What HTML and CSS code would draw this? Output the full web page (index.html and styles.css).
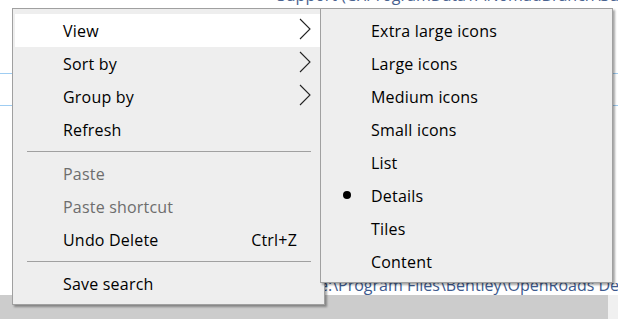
FILE: index.html
```html
<!DOCTYPE html>
<html lang="en">
<head>
    <meta charset="UTF-8">
    <meta name="viewport" content="width=device-width, initial-scale=1.0">
    <title>Context menu</title>

    <link rel="stylesheet" href="styles.css">
</head>
<body>

    <div class="explorer">
        <div class="top-line"><span>Support (C:\ProgramData\T\NomadBranch\Support)</span></div>
        <div class="grid">
            <div class="grid-row"></div>
            <div class="grid-row"></div>
        </div>
        <div class="spacer"></div>
        <div class="path-row">e:\Program Files\Bentley\OpenRoads Designer</div>
        <div class="hscroll">
            <div class="hscroll-thumb"></div>
            <div class="hscroll-corner"></div>
        </div>
    </div>

    <div class="menu main-menu">
        <div class="item active">
            <span class="label">View</span>
            <svg class="chevron" width="12" height="22" viewBox="0 0 12 22"><polyline points="1,1 11,11 1,21" fill="none" stroke="#222" stroke-width="1.1"/></svg>
        </div>
        <div class="item">
            <span class="label">Sort by</span>
            <svg class="chevron" width="12" height="22" viewBox="0 0 12 22"><polyline points="1,1 11,11 1,21" fill="none" stroke="#222" stroke-width="1.1"/></svg>
        </div>
        <div class="item">
            <span class="label">Group by</span>
            <svg class="chevron" width="12" height="22" viewBox="0 0 12 22"><polyline points="1,1 11,11 1,21" fill="none" stroke="#222" stroke-width="1.1"/></svg>
        </div>
        <div class="item"><span class="label">Refresh</span></div>
        <div class="separator"></div>
        <div class="item disabled"><span class="label">Paste</span></div>
        <div class="item disabled"><span class="label">Paste shortcut</span></div>
        <div class="item">
            <span class="label">Undo Delete</span>
            <span class="shortcut">Ctrl+Z</span>
        </div>
        <div class="separator"></div>
        <div class="item"><span class="label">Save search</span></div>
    </div>

    <div class="menu sub-menu">
        <div class="item"><span class="label">Extra large icons</span></div>
        <div class="item"><span class="label">Large icons</span></div>
        <div class="item"><span class="label">Medium icons</span></div>
        <div class="item"><span class="label">Small icons</span></div>
        <div class="item"><span class="label">List</span></div>
        <div class="item checked"><span class="bullet"></span><span class="label">Details</span></div>
        <div class="item"><span class="label">Tiles</span></div>
        <div class="item"><span class="label">Content</span></div>
    </div>

</body>
</html>
```

FILE: styles.css
```css
body {
    margin: 0;
    padding: 0;
    width: 618px;
    height: 333px;
    overflow: hidden;
    background-color: #fff;
    font-family: "Open Sans", "Noto Sans", Arial, sans-serif;
    position: relative;
}

.explorer {
    display: flex;
    flex-direction: column;
    height: 333px;
}

.top-line {
    height: 8px;
    overflow: hidden;
    display: flex;
    align-items: flex-end;
    padding-left: 277px;
    font-size: 16px;
    line-height: 20px;
    color: #4a6390;
    white-space: nowrap;
}

.top-line span {
    margin-bottom: 3px;
}

.grid {
    margin-top: 65px;
}

.grid-row {
    height: 31px;
    border-top: 1px solid #9fcdf2;
}

.spacer {
    flex: 1;
}

.path-row {
    height: 12px;
    overflow: hidden;
    padding-left: 319px;
    font-size: 16px;
    line-height: 20px;
    color: #3d5a8e;
    white-space: nowrap;
    display: flex;
    align-items: flex-end;
}

.hscroll {
    display: flex;
    height: 24px;
    margin-bottom: 14px;
}

.hscroll-thumb {
    width: 608px;
    background-color: #cccccc;
}

.hscroll-corner {
    flex: 1;
    background-color: #f0f0f0;
}

/* context menus */
.menu {
    position: absolute;
    top: 8px;
    background-color: #eeeeee;
    border: 1px solid #a0a0a0;
    box-shadow: 2px 2px 2px rgba(0, 0, 0, 0.35);
    padding: 5px 2px 4px 2px;
    box-sizing: border-box;
    font-size: 16px;
    letter-spacing: 0.2px;
    color: #000;
}

.main-menu {
    left: 12px;
    width: 313px;
    height: 297px;
}

.sub-menu {
    left: 320px;
    width: 293px;
    height: 275px;
}

.item {
    height: 33px;
    display: flex;
    align-items: center;
    padding-left: 48px;
    padding-right: 11px;
    position: relative;
}

.item.active {
    background-color: #fff;
}

.item.disabled {
    color: #6d6d6d;
}

.label {
    flex: 1;
    padding-top: 1px;
}

.shortcut {
    margin-right: 14px;
    padding-top: 1px;
}

.chevron {
    display: block;
    margin-top: -3px;
}

.separator {
    height: 11px;
    display: flex;
    align-items: center;
    padding: 0 11px 0 12px;
}

.separator::after {
    content: "";
    flex: 1;
    height: 1px;
    background-color: #a0a0a0;
}

.bullet {
    position: absolute;
    left: 20px;
    top: 12px;
    width: 8px;
    height: 8px;
    border-radius: 50%;
    background-color: #000;
}
```
